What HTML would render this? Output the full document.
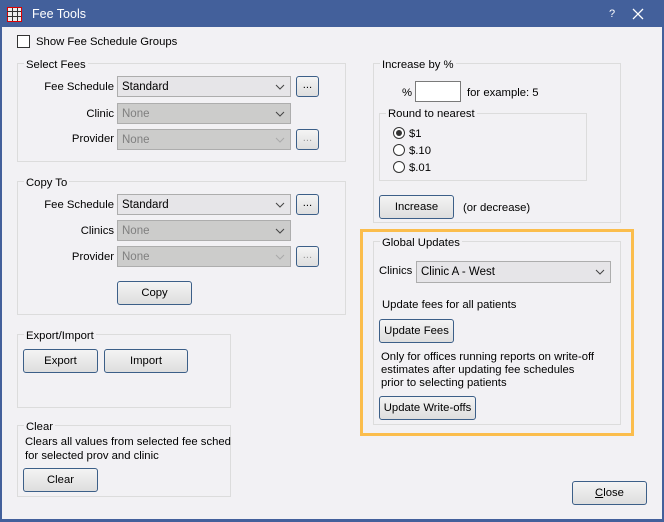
<!DOCTYPE html><html><head><style>
*{box-sizing:border-box;margin:0;padding:0}
body{width:664px;height:522px;background:#43609b;font-family:"Liberation Sans",sans-serif;font-size:11.3px;color:#000;position:relative;overflow:hidden}
#c{position:absolute;left:2px;top:27px;width:660px;height:492px;background:#f2f1f4}
.a{position:absolute;white-space:nowrap}
.l{position:absolute;white-space:nowrap;text-align:right;width:100px}
.g{position:absolute;border:1px solid #dcdcdc}
.lg{position:absolute;background:#f2f1f4;padding:0 2px;line-height:14px}
.cb{position:absolute;height:21px;border:1px solid #adadad;background:#e6e5e8;padding:3px 4px;line-height:14px;font-size:11.5px}
.cb.d{background:#cccccb;color:#7f7f7f}
.cb svg{position:absolute;right:5px;top:7px}
.b{position:absolute;border:1px solid #3c5f88;border-radius:3px;background:linear-gradient(#f4f4f4,#dedede);text-align:center;line-height:22px}
.b.d{color:#999;border-color:#3c5f88}
.r{position:absolute;width:12px;height:12px;border:1px solid #333;border-radius:50%;background:#fff}
</style></head><body>
<div class="a" style="left:7px;top:7px;width:15px;height:15px;border:1px solid #d00;background:
linear-gradient(90deg,#eee 0 4px,#333 4px 5px,#eee 5px 9px,#333 9px 10px,#eee 10px)"></div>
<div class="a" style="left:7px;top:11px;width:14px;height:1px;background:#333"></div>
<div class="a" style="left:7px;top:16px;width:14px;height:1px;background:#333"></div>
<div class="a" style="left:32px;top:7px;color:#fff;font-size:12.5px">Fee Tools</div>
<div class="a" style="left:609px;top:8px;color:#fff;font-size:11px">?</div>
<svg class="a" style="left:632px;top:8px" width="12" height="12"><path d="M1 1L11 11M11 1L1 11" stroke="#fff" stroke-width="1.3"/></svg>
<div id="c"></div>

<div class="a" style="left:17px;top:35px;width:13px;height:13px;border:1px solid #333;background:#fff"></div>
<div class="a" style="left:36px;top:36px">Show Fee Schedule Groups</div>

<div class="g" style="left:17px;top:63px;width:329px;height:99px"></div>
<div class="lg" style="left:24px;top:58px">Select Fees</div>
<div class="l" style="left:14px;top:81px">Fee Schedule</div>
<div class="cb" style="left:117px;top:76px;width:174px">Standard<svg width="10" height="6"><path d="M1 1L5 5L9 1" fill="none" stroke="#444"/></svg></div>
<div class="b" style="left:296px;top:76px;width:23px;height:21px;line-height:17px">...</div>
<div class="l" style="left:14px;top:108px">Clinic</div>
<div class="cb d" style="left:117px;top:103px;width:174px">None<svg width="10" height="6"><path d="M1 1L5 5L9 1" fill="none" stroke="#444"/></svg></div>
<div class="l" style="left:14px;top:133px">Provider</div>
<div class="cb d" style="left:117px;top:129px;width:174px">None<svg width="10" height="6"><path d="M1 1L5 5L9 1" fill="none" stroke="#aaa"/></svg></div>
<div class="b d" style="left:296px;top:129px;width:23px;height:21px;line-height:17px">...</div>

<div class="g" style="left:17px;top:181px;width:329px;height:134px"></div>
<div class="lg" style="left:24px;top:176px">Copy To</div>
<div class="l" style="left:14px;top:199px">Fee Schedule</div>
<div class="cb" style="left:117px;top:194px;width:174px">Standard<svg width="10" height="6"><path d="M1 1L5 5L9 1" fill="none" stroke="#444"/></svg></div>
<div class="b" style="left:296px;top:194px;width:23px;height:21px;line-height:17px">...</div>
<div class="l" style="left:14px;top:225px">Clinics</div>
<div class="cb d" style="left:117px;top:220px;width:174px">None<svg width="10" height="6"><path d="M1 1L5 5L9 1" fill="none" stroke="#444"/></svg></div>
<div class="l" style="left:14px;top:251px">Provider</div>
<div class="cb d" style="left:117px;top:246px;width:174px">None<svg width="10" height="6"><path d="M1 1L5 5L9 1" fill="none" stroke="#aaa"/></svg></div>
<div class="b d" style="left:296px;top:246px;width:23px;height:21px;line-height:17px">...</div>
<div class="b" style="left:117px;top:281px;width:75px;height:24px">Copy</div>

<div class="g" style="left:17px;top:334px;width:214px;height:74px"></div>
<div class="lg" style="left:24px;top:329px">Export/Import</div>
<div class="b" style="left:23px;top:349px;width:75px;height:24px">Export</div>
<div class="b" style="left:104px;top:349px;width:84px;height:24px">Import</div>

<div class="g" style="left:17px;top:425px;width:214px;height:72px"></div>
<div class="lg" style="left:24px;top:420px">Clear</div>
<div class="a" style="left:25px;top:436px">Clears all values from selected fee sched</div>
<div class="a" style="left:25px;top:450px">for selected prov and clinic</div>
<div class="b" style="left:23px;top:468px;width:75px;height:24px">Clear</div>

<div class="g" style="left:373px;top:63px;width:248px;height:160px"></div>
<div class="lg" style="left:380px;top:58px">Increase by %</div>
<div class="a" style="left:402px;top:87px">%</div>
<div class="a" style="left:415px;top:81px;width:46px;height:21px;border:1px solid #7a7a7a;background:#fff"></div>
<div class="a" style="left:467px;top:87px">for example: 5</div>
<div class="g" style="left:379px;top:113px;width:208px;height:68px"></div>
<div class="lg" style="left:386px;top:107px">Round to nearest</div>
<div class="r" style="left:393px;top:127px"><div style="position:absolute;left:2px;top:2px;width:6px;height:6px;border-radius:50%;background:#333"></div></div>
<div class="a" style="left:409px;top:128px">$1</div>
<div class="r" style="left:393px;top:144px"></div>
<div class="a" style="left:409px;top:145px">$.10</div>
<div class="r" style="left:393px;top:161px"></div>
<div class="a" style="left:409px;top:162px">$.01</div>
<div class="b" style="left:379px;top:195px;width:75px;height:24px">Increase</div>
<div class="a" style="left:463px;top:202px">(or decrease)</div>

<div class="a" style="left:360px;top:229px;width:274px;height:207px;border:3px solid #fbbd4c"></div>
<div class="g" style="left:373px;top:241px;width:248px;height:184px"></div>
<div class="lg" style="left:380px;top:236px">Global Updates</div>
<div class="a" style="left:379px;top:265px">Clinics</div>
<div class="cb" style="left:416px;top:261px;width:195px;height:22px;line-height:15px">Clinic A - West<svg width="10" height="6"><path d="M1 1L5 5L9 1" fill="none" stroke="#444"/></svg></div>
<div class="a" style="left:382px;top:299px">Update fees for all patients</div>
<div class="b" style="left:379px;top:319px;width:75px;height:24px">Update Fees</div>
<div class="a" style="left:381px;top:351px">Only for offices running reports on write-off</div>
<div class="a" style="left:381px;top:364px">estimates after updating fee schedules</div>
<div class="a" style="left:381px;top:377px">prior to selecting patients</div>
<div class="b" style="left:379px;top:396px;width:97px;height:24px">Update Write-offs</div>

<div class="b" style="left:572px;top:481px;width:75px;height:24px"><u>C</u>lose</div>
</body></html>
